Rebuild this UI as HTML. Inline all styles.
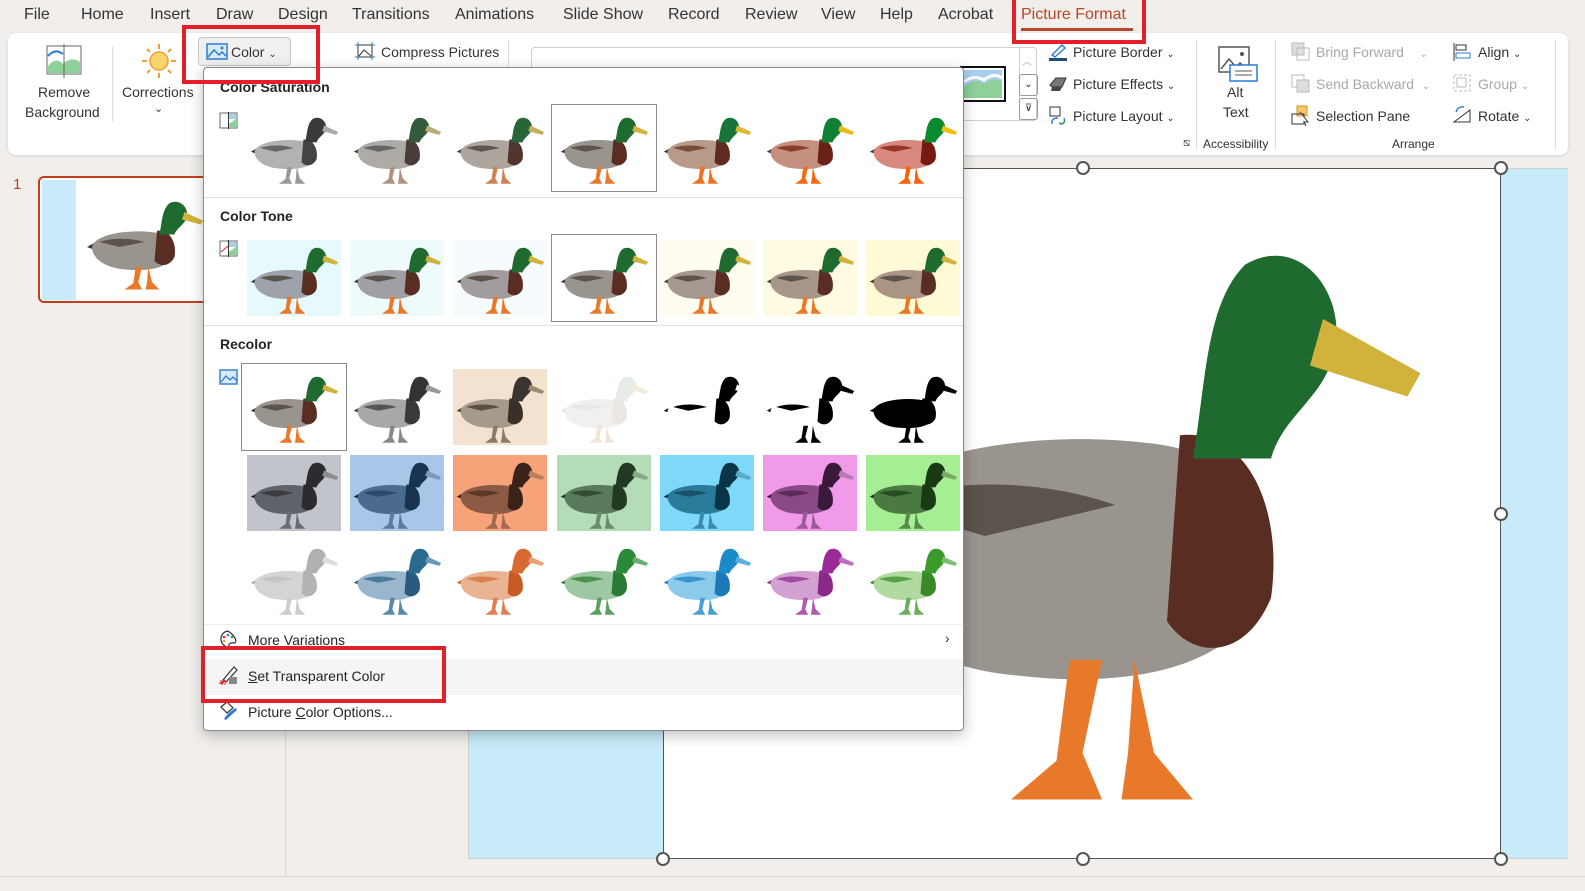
<!DOCTYPE html>
<html><head><meta charset="utf-8"><style>
*{margin:0;padding:0;box-sizing:border-box}
body{width:1585px;height:891px;overflow:hidden;position:relative;background:#f1eeeb;font-family:"Liberation Sans",sans-serif;color:#242424}
.a{position:absolute;white-space:nowrap}
.tab{position:absolute;top:6px;font-size:16px;color:#333}
.rb{position:absolute;font-size:14px;color:#333}
.dis{color:#a8a8a8}
.red{position:absolute;border:4px solid #e3202a}
.menu{position:absolute;left:203px;top:67px;width:761px;height:664px;background:#fff;border:1px solid #8a8a8a;border-radius:4px;box-shadow:0 4px 14px rgba(0,0,0,.25);overflow:hidden}
.hd{position:absolute;left:16px;font-size:14px;font-weight:bold;color:#242424}
.cell{position:absolute;width:94px;height:76px}
.cell svg{width:100%;height:100%}
.sel{outline:1px solid #8a8a8a;outline-offset:5px}
.sep{position:absolute;left:0;right:0;height:1px;background:#e0e0e0}
.mi{position:absolute;left:44px;font-size:14px;color:#242424}
</style></head><body>
<svg width="0" height="0" style="position:absolute">
<defs>
<symbol id="duck" viewBox="0 0 100 80">
<path d="M4 44 L18 36 L28 40 L20 50 Z" fill="var(--d,#333)"/>
<path d="M8 44 C10 34 35 30 55 32 C68 33 74 40 74 48 C72 60 55 64 35 62 C20 61 8 54 8 44Z" fill="var(--b,#9a948e)"/>
<path d="M14 40 C25 36 40 37 50 40 L30 44 Z" fill="var(--w,#5c534c)"/>
<path d="M60 31 C70 30 76 40 74 52 C70 60 62 60 58 55 Z" fill="var(--c,#5a2d22)"/>
<path d="M62 34 C64 24 64 14 70 9 C78 5 85 12 84 19 C83 26 76 28 74 34 Z" fill="var(--h,#1f6b2f)"/>
<path d="M82 16 L97 23 L95 26 L80 22Z" fill="var(--y,#d1b23a)"/>
<path d="M43 60 L41 73 L34 78 L48 78 L45 72 L48 60Z M53 60 L56 72 L62 78 L51 78 L52 72 Z" fill="var(--l,#e8782a)"/>
</symbol>
</defs></svg>

<!-- tabs -->
<div class="tab" style="left:24px">File</div>
<div class="tab" style="left:81px">Home</div>
<div class="tab" style="left:150px">Insert</div>
<div class="tab" style="left:216px">Draw</div>
<div class="tab" style="left:278px">Design</div>
<div class="tab" style="left:352px">Transitions</div>
<div class="tab" style="left:455px">Animations</div>
<div class="tab" style="left:563px">Slide Show</div>
<div class="tab" style="left:668px">Record</div>
<div class="tab" style="left:745px">Review</div>
<div class="tab" style="left:821px">View</div>
<div class="tab" style="left:880px">Help</div>
<div class="tab" style="left:938px">Acrobat</div>
<div class="tab" style="left:1021px;color:#b7472a">Picture Format</div>
<div class="a" style="left:1021px;top:28px;width:112px;height:3px;background:#b7472a"></div>

<!-- ribbon -->
<div class="a" style="left:8px;top:33px;width:1560px;height:122px;background:#fff;border-radius:8px;box-shadow:0 1px 3px rgba(0,0,0,.12)"></div>
<svg class="a" style="left:46px;top:44px" width="36" height="34" viewBox="0 0 36 34"><rect x="1" y="2" width="34" height="28" fill="#fff" stroke="#666"/><path d="M2 22 Q10 12 17 20 Q25 12 34 18 L34 29 L2 29Z" fill="#8fd19a"/><path d="M2 12 Q9 4 17 10" stroke="#2b7cd3" fill="none" stroke-width="2"/><line x1="18" y1="0" x2="18" y2="34" stroke="#666"/></svg>
<div class="rb" style="left:38px;top:84px">Remove</div>
<div class="rb" style="left:25px;top:104px">Background</div>
<div class="a" style="left:112px;top:46px;width:1px;height:76px;background:#ddd"></div>
<svg class="a" style="left:140px;top:42px" width="38" height="38" viewBox="0 0 38 38"><circle cx="19" cy="19" r="9" fill="#fbd56b" stroke="#f39c35" stroke-width="1.5"/><g stroke="#f39c35" stroke-width="2"><line x1="19" y1="2" x2="19" y2="7"/><line x1="19" y1="31" x2="19" y2="36"/><line x1="2" y1="19" x2="7" y2="19"/><line x1="31" y1="19" x2="36" y2="19"/><line x1="7" y1="7" x2="10" y2="10"/><line x1="28" y1="28" x2="31" y2="31"/><line x1="31" y1="7" x2="28" y2="10"/><line x1="7" y1="31" x2="10" y2="28"/></g></svg>
<div class="rb" style="left:122px;top:84px">Corrections</div>
<div class="rb" style="left:154px;top:102px;font-size:11px">⌄</div>
<div class="a" style="left:198px;top:37px;width:93px;height:29px;background:#f0f0f0;border:1px solid #c8c8c8;border-radius:4px"></div>
<svg class="a" style="left:206px;top:43px" width="22" height="17" viewBox="0 0 22 17"><rect x="1" y="1" width="20" height="15" fill="#dbeaf9" stroke="#2b7cd3" stroke-width="1.5"/><path d="M2 14 L8 7 L13 12 L16 9 L20 13" stroke="#2b7cd3" fill="none" stroke-width="1.5"/><circle cx="16" cy="5" r="1.5" fill="#2b7cd3"/></svg>
<div class="rb" style="left:231px;top:44px">Color <span style="font-size:10px">⌄</span></div>
<svg class="a" style="left:355px;top:42px" width="20" height="18" viewBox="0 0 20 18"><rect x="3" y="3" width="14" height="12" fill="none" stroke="#333"/><path d="M4 14 L9 8 L16 14" stroke="#333" fill="none"/><path d="M0 3H3V0M17 0V3H20M0 15H3V18M17 18V15H20" stroke="#2b7cd3" fill="none"/></svg>
<div class="rb" style="left:381px;top:44px">Compress Pictures</div>
<div class="a" style="left:508px;top:40px;width:1px;height:80px;background:#ddd"></div>
<div class="a" style="left:531px;top:47px;width:506px;height:74px;border:1px solid #d0d0d0;border-radius:4px"></div>
<svg class="a" style="left:960px;top:66px" width="46" height="36" viewBox="0 0 46 36"><rect x="1" y="1" width="44" height="34" fill="#fff" stroke="#111" stroke-width="2"/><rect x="4" y="4" width="38" height="28" fill="#a8cef0"/><path d="M4 22 Q14 10 24 18 Q34 10 42 16 L42 32 L4 32Z" fill="#8fd19a"/><path d="M4 16 Q14 8 24 14 Q34 6 42 12" stroke="#fff" fill="none" stroke-width="3"/></svg>
<div class="a" style="left:1019px;top:47px;width:19px;height:74px;border-left:1px solid #d0d0d0"></div>
<div class="rb" style="left:1022px;top:53px;font-size:10px;color:#aaa">︿</div>
<div class="a" style="left:1019px;top:74px;width:19px;height:22px;border:1px solid #999;border-radius:3px;font-size:10px;text-align:center;line-height:20px">⌄</div>
<div class="a" style="left:1019px;top:98px;width:19px;height:22px;border:1px solid #999;border-radius:3px;font-size:10px;text-align:center;line-height:20px">⊽</div>
<svg class="a" style="left:1048px;top:43px" width="20" height="18"><path d="M4 12 L14 2 L17 5 L7 14Z" fill="none" stroke="#2b7cd3" stroke-width="1.4"/><rect x="1" y="15" width="18" height="3" fill="#1f4e79"/></svg>
<div class="rb" style="left:1073px;top:44px">Picture Border <span style="font-size:10px">⌄</span></div>
<svg class="a" style="left:1048px;top:75px" width="20" height="18"><path d="M2 10 L8 3 H18 L14 12 H4Z" fill="#777" stroke="#333"/><path d="M4 12 H14 L12 16 H3Z" fill="#444"/></svg>
<div class="rb" style="left:1073px;top:76px">Picture Effects <span style="font-size:10px">⌄</span></div>
<svg class="a" style="left:1048px;top:106px" width="20" height="20"><rect x="2" y="1" width="10" height="9" fill="none" stroke="#333"/><path d="M4 18 Q3 12 10 12 M12 18 Q18 18 16 12" stroke="#2b7cd3" fill="none" stroke-width="1.4"/><path d="M11 17 Q15 19 17 15" stroke="#3c9a4a" fill="none" stroke-width="1.4"/></svg>
<div class="rb" style="left:1073px;top:108px">Picture Layout <span style="font-size:10px">⌄</span></div>
<div class="rb" style="left:1183px;top:137px;font-size:11px">⧅</div>
<div class="a" style="left:1196px;top:40px;width:1px;height:110px;background:#ddd"></div>
<svg class="a" style="left:1218px;top:45px" width="40" height="38" viewBox="0 0 40 38"><rect x="1" y="2" width="30" height="25" fill="#fff" stroke="#555" stroke-width="1.5"/><path d="M3 24 L11 14 L18 22 L22 18 L29 24" stroke="#555" fill="none" stroke-width="1.5"/><circle cx="24" cy="9" r="2" fill="#555"/><rect x="12" y="20" width="27" height="16" fill="#fff" stroke="#2b7cd3" stroke-width="1.5"/><path d="M17 26H34M17 30H34" stroke="#555"/></svg>
<div class="rb" style="left:1227px;top:84px">Alt</div>
<div class="rb" style="left:1223px;top:104px">Text</div>
<div class="rb" style="left:1203px;top:137px;font-size:12px">Accessibility</div>
<div class="a" style="left:1275px;top:40px;width:1px;height:110px;background:#ddd"></div>
<svg class="a" style="left:1290px;top:41px" width="22" height="22"><rect x="2" y="2" width="12" height="12" fill="#ddd" stroke="#bbb"/><rect x="7" y="7" width="12" height="12" fill="none" stroke="#bbb"/></svg>
<div class="rb dis" style="left:1316px;top:44px">Bring Forward &nbsp;&nbsp;&nbsp;<span style="font-size:10px">⌄</span></div>
<svg class="a" style="left:1290px;top:73px" width="22" height="22"><rect x="2" y="2" width="12" height="12" fill="none" stroke="#bbb"/><rect x="7" y="7" width="12" height="12" fill="#ddd" stroke="#bbb"/></svg>
<div class="rb dis" style="left:1316px;top:76px">Send Backward &nbsp;<span style="font-size:10px">⌄</span></div>
<svg class="a" style="left:1290px;top:104px" width="22" height="22"><rect x="7" y="2" width="10" height="10" fill="#f8c76a" stroke="#d99a28"/><rect x="2" y="10" width="12" height="10" fill="none" stroke="#333"/><path d="M10 8 L18 18 L14 18 L16 22" stroke="#333" fill="#fff"/></svg>
<div class="rb" style="left:1316px;top:108px">Selection Pane</div>
<svg class="a" style="left:1452px;top:42px" width="20" height="20"><line x1="2" y1="1" x2="2" y2="19" stroke="#333"/><rect x="4" y="3" width="10" height="5" fill="none" stroke="#333"/><rect x="4" y="11" width="14" height="5" fill="none" stroke="#2b7cd3"/></svg>
<div class="rb" style="left:1478px;top:44px">Align <span style="font-size:10px">⌄</span></div>
<svg class="a" style="left:1452px;top:73px" width="20" height="20"><rect x="2" y="2" width="16" height="16" fill="none" stroke="#bbb" stroke-dasharray="3 2"/><rect x="5" y="5" width="9" height="9" fill="none" stroke="#bbb"/></svg>
<div class="rb dis" style="left:1478px;top:76px">Group <span style="font-size:10px">⌄</span></div>
<svg class="a" style="left:1452px;top:104px" width="20" height="20"><path d="M2 18 L18 6 V18Z" fill="none" stroke="#333"/><path d="M4 8 Q6 2 12 3" stroke="#2b7cd3" fill="none" stroke-width="1.4"/></svg>
<div class="rb" style="left:1478px;top:108px">Rotate <span style="font-size:10px">⌄</span></div>
<div class="rb" style="left:1392px;top:137px;font-size:12px">Arrange</div>
<div class="a" style="left:1555px;top:40px;width:1px;height:110px;background:#ddd"></div>

<!-- left thumbnail pane -->
<div class="a" style="left:13px;top:176px;font-size:15px;color:#c43e1c">1</div>
<div class="a" style="left:38px;top:176px;width:170px;height:127px;border:2px solid #c43e1c;border-radius:6px;background:#fff;overflow:hidden">
<div class="a" style="left:2px;top:2px;width:34px;height:120px;background:#c8ebf9"></div>
<svg class="a" style="left:42px;top:14px" width="125" height="100"><use href="#duck"/></svg>
</div>
<div class="a" style="left:285px;top:155px;width:1px;height:736px;background:#d8d4d0"></div>

<!-- slide -->
<div class="a" style="left:468px;top:168px;width:1100px;height:691px;background:#fff;border:1px solid #d0d0d0"></div>
<div class="a" style="left:469px;top:169px;width:194px;height:689px;background:#c8ebf9"></div>
<div class="a" style="left:1501px;top:169px;width:67px;height:689px;background:#c8ebf9"></div>
<svg class="a" style="left:790px;top:195px" width="650" height="620" viewBox="0 0 100 80" preserveAspectRatio="none"><use href="#duck"/></svg>
<div class="a" style="left:663px;top:168px;width:838px;height:691px;border:1.5px solid #555"></div>
<div class="a" style="left:1076px;top:161px;width:14px;height:14px;border:2px solid #555;border-radius:50%;background:#fff"></div>
<div class="a" style="left:1494px;top:161px;width:14px;height:14px;border:2px solid #555;border-radius:50%;background:#fff"></div>
<div class="a" style="left:1494px;top:507px;width:14px;height:14px;border:2px solid #555;border-radius:50%;background:#fff"></div>
<div class="a" style="left:656px;top:852px;width:14px;height:14px;border:2px solid #555;border-radius:50%;background:#fff"></div>
<div class="a" style="left:1076px;top:852px;width:14px;height:14px;border:2px solid #555;border-radius:50%;background:#fff"></div>
<div class="a" style="left:1494px;top:852px;width:14px;height:14px;border:2px solid #555;border-radius:50%;background:#fff"></div>
<div class="a" style="left:0;top:876px;width:1585px;height:15px;background:#f1eeeb;border-top:1px solid #ddd"></div>

<!-- menu -->
<div class="menu">
<div class="hd" style="top:11px">Color Saturation</div>
<div class="hd" style="top:140px">Color Tone</div>
<div class="hd" style="top:268px">Recolor</div>
<div class="sep" style="top:129px"></div>
<div class="sep" style="top:257px"></div>
<svg class="a" style="left:15px;top:44px" width="19" height="17"><rect x="1" y="1" width="17" height="15" fill="#fff" stroke="#666"/><path d="M10 12 L18 6 V15 H10Z" fill="#8fd19a"/><rect x="10" y="2" width="7" height="5" fill="#a8cef0"/><line x1="9.5" y1="0" x2="9.5" y2="17" stroke="#333"/></svg>
<svg class="a" style="left:15px;top:172px" width="19" height="17"><rect x="1" y="1" width="17" height="15" fill="#fff" stroke="#666"/><path d="M2 12 L9 6" stroke="#e3202a"/><path d="M10 12 L18 6 V15 H10Z" fill="#8fd19a"/><rect x="10" y="2" width="7" height="5" fill="#a8cef0"/><line x1="9.5" y1="0" x2="9.5" y2="17" stroke="#333"/></svg>
<svg class="a" style="left:15px;top:301px" width="19" height="16"><rect x="1" y="1" width="17" height="14" fill="#dbeaf9" stroke="#2b7cd3" stroke-width="1.4"/><path d="M2 13 L7 7 L11 11 L14 8 L18 12" stroke="#2b7cd3" fill="none" stroke-width="1.3"/></svg>

<!-- saturation row -->
<div class="cell" style="left:43px;top:42px;--b:#b2b2b2;--h:#3a3a3a;--c:#444;--y:#aaa;--l:#999;--w:#666"><svg><use href="#duck"/></svg></div>
<div class="cell" style="left:146px;top:42px;--b:#aeaaa6;--h:#345a3c;--c:#4a3c38;--y:#b8ac7a;--l:#b09080;--w:#666"><svg><use href="#duck"/></svg></div>
<div class="cell" style="left:249px;top:42px;--b:#ada69f;--h:#28663a;--c:#533530;--y:#c4ae5a;--l:#d08050;--w:#5f5650"><svg><use href="#duck"/></svg></div>
<div class="cell sel" style="left:353px;top:42px;background:#fff"><svg><use href="#duck"/></svg></div>
<div class="cell" style="left:456px;top:42px;--b:#b79a8a;--h:#18743a;--c:#602a1e;--y:#ddb830;--l:#ee7020;--w:#7a4a3a"><svg><use href="#duck"/></svg></div>
<div class="cell" style="left:559px;top:42px;--b:#c69080;--h:#108034;--c:#6a2218;--y:#e6bc20;--l:#f56a10;--w:#8a3e2e"><svg><use href="#duck"/></svg></div>
<div class="cell" style="left:662px;top:42px;--b:#d8887e;--h:#0a8a30;--c:#761a10;--y:#efc010;--l:#fa6008;--w:#9a3424"><svg><use href="#duck"/></svg></div>

<!-- tone row -->
<div class="cell" style="left:43px;top:172px;background:#e6fafd;--b:#9ea2aa"><svg><use href="#duck"/></svg></div>
<div class="cell" style="left:146px;top:172px;background:#eefbfd;--b:#a09fa4"><svg><use href="#duck"/></svg></div>
<div class="cell" style="left:249px;top:172px;background:#f6fcfd;--b:#a29c9c"><svg><use href="#duck"/></svg></div>
<div class="cell sel" style="left:353px;top:172px;background:#fff"><svg><use href="#duck"/></svg></div>
<div class="cell" style="left:456px;top:172px;background:#fffdf0;--b:#a49890"><svg><use href="#duck"/></svg></div>
<div class="cell" style="left:559px;top:172px;background:#fffbe3;--b:#a8968a"><svg><use href="#duck"/></svg></div>
<div class="cell" style="left:662px;top:172px;background:#fffad6;--b:#aa9484"><svg><use href="#duck"/></svg></div>

<!-- recolor row1 -->
<div class="cell sel" style="left:43px;top:301px;background:#fff"><svg><use href="#duck"/></svg></div>
<div class="cell" style="left:146px;top:301px;--b:#a8a8a8;--h:#333;--c:#3a3a3a;--y:#999;--l:#888;--w:#555"><svg><use href="#duck"/></svg></div>
<div class="cell" style="left:249px;top:301px;background:#f3e2d0;--b:#a69a8c;--h:#3a3530;--c:#3a3028;--y:#988c70;--l:#8a7a66;--w:#5a5046"><svg><use href="#duck"/></svg></div>
<div class="cell" style="left:353px;top:301px;--b:#f0f0ee;--h:#e6ece6;--c:#ece6e4;--y:#f0ecdc;--l:#f3e4d8;--w:#e8e8e8;--d:#e0e0e0"><svg><use href="#duck"/></svg></div>
<div class="cell" style="left:456px;top:301px;--b:#fff;--h:#000;--c:#000;--y:#fff;--l:#fff;--w:#000;--d:#000"><svg><use href="#duck"/></svg></div>
<div class="cell" style="left:559px;top:301px;--b:#fff;--h:#000;--c:#000;--y:#000;--l:#000;--w:#000;--d:#000"><svg><use href="#duck"/></svg></div>
<div class="cell" style="left:662px;top:301px;--b:#000;--h:#000;--c:#000;--y:#000;--l:#000;--w:#000;--d:#000"><svg><use href="#duck"/></svg></div>

<!-- recolor row2 -->
<div class="cell" style="left:43px;top:387px;background:#c2c4cc;--b:#60626a;--h:#2a2c30;--c:#2a2c30;--y:#8a8c92;--l:#6a6c72;--w:#3a3c42;--d:#222"><svg><use href="#duck"/></svg></div>
<div class="cell" style="left:146px;top:387px;background:#a8c6e8;--b:#4a6a8e;--h:#1a3350;--c:#1a3350;--y:#7a9abc;--l:#5a7aa0;--w:#2a4a6c;--d:#102030"><svg><use href="#duck"/></svg></div>
<div class="cell" style="left:249px;top:387px;background:#f8a27a;--b:#8a5a44;--h:#3a2218;--c:#3a2218;--y:#b8805e;--l:#a06a50;--w:#5a3828;--d:#2a1810"><svg><use href="#duck"/></svg></div>
<div class="cell" style="left:353px;top:387px;background:#b4dcb6;--b:#5a7a5c;--h:#223a24;--c:#223a24;--y:#86a888;--l:#6a8c6c;--w:#344c36;--d:#182818"><svg><use href="#duck"/></svg></div>
<div class="cell" style="left:456px;top:387px;background:#7ed8fa;--b:#2a7a9a;--h:#0a3448;--c:#0a3448;--y:#5aaac8;--l:#3a8aaa;--w:#1a5068;--d:#082030"><svg><use href="#duck"/></svg></div>
<div class="cell" style="left:559px;top:387px;background:#f29aea;--b:#8a4a88;--h:#3a1a3a;--c:#3a1a3a;--y:#b87ab8;--l:#9a5a98;--w:#5a2c5a;--d:#2a102a"><svg><use href="#duck"/></svg></div>
<div class="cell" style="left:662px;top:387px;background:#a6ee94;--b:#4a7a40;--h:#1a3a14;--c:#1a3a14;--y:#7aaa6a;--l:#5a8a4a;--w:#2a4c22;--d:#102808"><svg><use href="#duck"/></svg></div>

<!-- recolor row3 -->
<div class="cell" style="left:43px;top:473px;--b:#d4d4d4;--h:#b0b0b0;--c:#b4b4b4;--y:#ddd;--l:#ccc;--w:#c4c4c4;--d:#aaa"><svg><use href="#duck"/></svg></div>
<div class="cell" style="left:146px;top:473px;--b:#9ab6cc;--h:#2a6a8e;--c:#2a5a7e;--y:#6a9aba;--l:#5a8aaa;--w:#4a7a9a;--d:#2a5a7a"><svg><use href="#duck"/></svg></div>
<div class="cell" style="left:249px;top:473px;--b:#eab494;--h:#d86a30;--c:#c85a24;--y:#eaa070;--l:#e08050;--w:#d88050;--d:#c05a28"><svg><use href="#duck"/></svg></div>
<div class="cell" style="left:353px;top:473px;--b:#9ec8a2;--h:#2a8a3a;--c:#2a7a34;--y:#6ab070;--l:#5aa062;--w:#4a9050;--d:#2a7032"><svg><use href="#duck"/></svg></div>
<div class="cell" style="left:456px;top:473px;--b:#8ccaec;--h:#1a8ac8;--c:#1a7ab8;--y:#5ab0e0;--l:#4aa0d4;--w:#3a94cc;--d:#1a70a8"><svg><use href="#duck"/></svg></div>
<div class="cell" style="left:559px;top:473px;--b:#d4a2d2;--h:#9a2a98;--c:#8a2a88;--y:#c06ac0;--l:#b05ab0;--w:#a04aa0;--d:#80287e"><svg><use href="#duck"/></svg></div>
<div class="cell" style="left:662px;top:473px;--b:#b0daa0;--h:#3a9a2a;--c:#3a8a2a;--y:#7ac06a;--l:#6ab05a;--w:#5aa04a;--d:#3a8028"><svg><use href="#duck"/></svg></div>

<div class="sep" style="top:556px;background:#eee"></div>
<svg class="a" style="left:14px;top:561px" width="20" height="20"><path d="M10 2 A8 8 0 1 0 12 18 C9 16 12 13 16 14 C19 14 19 8 10 2Z" fill="#fff" stroke="#333" stroke-width="1.2"/><circle cx="6" cy="8" r="1.3" fill="#e3202a"/><circle cx="10" cy="6" r="1.3" fill="#2b7cd3"/><circle cx="14" cy="8" r="1.3" fill="#3c9a4a"/><circle cx="6" cy="12" r="1.3" fill="#d99a28"/></svg>
<div class="mi" style="top:564px">More Variations</div>
<div class="a" style="left:741px;top:562px;font-size:14px;color:#333">›</div>
<div class="a" style="left:0;top:591px;width:761px;height:36px;background:#f5f5f5"></div>
<svg class="a" style="left:14px;top:596px" width="22" height="22"><path d="M5 16 L16 3 L19 6 L8 18Z" fill="#fff" stroke="#333" stroke-width="1.2"/><path d="M3 20 L7 16" stroke="#e3202a" stroke-width="2"/><rect x="11" y="13" width="8" height="7" fill="#888"/><rect x="2" y="17" width="6" height="3" fill="none" stroke="#e3202a" stroke-dasharray="2 1"/></svg>
<div class="mi" style="top:600px"><u>S</u>et Transparent Color</div>
<svg class="a" style="left:14px;top:632px" width="22" height="22"><path d="M3 7 L9 2 L15 8 L9 13Z" fill="#fff" stroke="#333" stroke-width="1.2"/><path d="M6 19 Q10 12 18 8 L19 10 Q12 16 8 20Z" fill="#2b7cd3"/></svg>
<div class="mi" style="top:636px">Picture <u>C</u>olor Options...</div>
</div>

<!-- red highlight boxes -->
<div class="red" style="left:1012px;top:-4px;width:134px;height:48px"></div>
<div class="red" style="left:182px;top:25px;width:138px;height:59px"></div>
<div class="red" style="left:201px;top:646px;width:245px;height:57px"></div>
</body></html>
